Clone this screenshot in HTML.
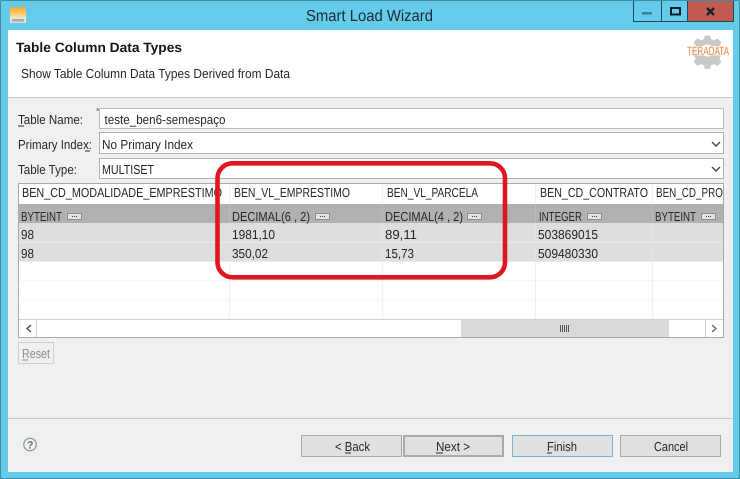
<!DOCTYPE html>
<html><head><meta charset="utf-8">
<style>
html,body{margin:0;padding:0;width:740px;height:479px;overflow:hidden;background:#65cbea}
svg{display:block}
text{font-family:"Liberation Sans",sans-serif;font-size:13px;fill:#262626;white-space:pre}
</style></head>
<body>
<svg width="740" height="479" viewBox="0 0 740 479" xmlns="http://www.w3.org/2000/svg" text-rendering="geometricPrecision">
<defs><clipPath id="tbl"><rect x="19" y="184" width="704" height="136"/></clipPath>
<clipPath id="h1"><rect x="19" y="184" width="204" height="20"/></clipPath>
<linearGradient id="ic" x1="0" y1="0" x2="0" y2="1"><stop offset="0" stop-color="#f6a92c"/><stop offset=".55" stop-color="#fad98a"/><stop offset=".7" stop-color="#ece9dc"/><stop offset="1" stop-color="#dcdcd8"/></linearGradient>
<filter id="soft" x="0" y="0" width="100%" height="100%"><feGaussianBlur stdDeviation="0.35"/></filter></defs>
<g filter="url(#soft)">
<!-- window frame -->
<rect x="0.5" y="0.5" width="739" height="478" fill="#65cbea" stroke="#1d4a5e"/>
<!-- title icon -->
<rect x="10" y="7" width="16" height="16" fill="url(#ic)"/>
<rect x="12" y="19" width="12" height="2.500" fill="#a8a8a4"/>
<text x="306" y="21" textLength="127" lengthAdjust="spacingAndGlyphs" style="font-size:16px;fill:#1c2c36">Smart Load Wizard</text>
<!-- window controls -->
<rect x="633.500" y="0.500" width="28" height="21" fill="#65cbea" stroke="#1d4a5e"/>
<rect x="661.500" y="0.500" width="26" height="21" fill="#65cbea" stroke="#1d4a5e"/>
<rect x="687.500" y="0.500" width="46" height="21" fill="#c25a50" stroke="#1d4a5e"/>
<rect x="642" y="12" width="10" height="2.500" fill="#3f7f98"/>
<rect x="671" y="8" width="9" height="6.500" fill="none" stroke="#0c1a22" stroke-width="2"/>
<path d="M707 8l7 7M714 8l-7 7" stroke="#17222a" stroke-width="2.400" fill="none"/>
<!-- content -->
<rect x="8" y="30" width="725" height="442" fill="#f0f0f0"/>
<rect x="8" y="30" width="725" height="67" fill="#fff"/>
<rect x="8" y="97" width="725" height="1" fill="#c8c8c8"/>
<text x="16" y="52" textLength="166" lengthAdjust="spacingAndGlyphs" style="font-size:13.500px;font-weight:bold;fill:#151515">Table Column Data Types</text>
<text x="21" y="78" textLength="269" lengthAdjust="spacingAndGlyphs">Show Table Column Data Types Derived from Data</text>
<!-- logo -->
<g transform="translate(707.500 50.500) scale(.68)">
<path fill="#c9c9c9" d="M-4-22h8l1 5 5 2 4.500-3 6 6-3 4.500 2 5 5 1v8l-5 1-2 5 3 4.500-6 6-4.500-3-5 2-1 5h-8l-1-5-5-2-4.500 3-6-6 3-4.500-2-5-5-1v-8l5-1 2-5-3-4.500 6-6 4.500 3 5-2z"/>
<circle r="9" fill="#fff"/>
</g>
<rect x="686" y="46" width="43" height="9.500" fill="#fff" opacity=".8"/>
<text x="687" y="55" textLength="42" lengthAdjust="spacingAndGlyphs" style="font-size:12px;fill:#ee8a3c">TERADATA</text>
<!-- fields -->
<text x="18" y="124" textLength="65" lengthAdjust="spacingAndGlyphs">Table Name:</text>
<path d="M18 126h6" stroke="#2a2a2a"/>
<text x="96" y="114" style="font-size:9px;fill:#666">*</text>
<rect x="99.500" y="108.500" width="624" height="20" fill="#fff" stroke="#bcbcbc"/>
<text x="104.500" y="124" textLength="121" lengthAdjust="spacingAndGlyphs">teste_ben6-semespaço</text>
<text x="18" y="149" textLength="74" lengthAdjust="spacingAndGlyphs">Primary Index:</text>
<path d="M85 151h5" stroke="#2a2a2a"/>
<rect x="99.500" y="132.500" width="624" height="21" fill="#fff" stroke="#b0b0b0"/>
<text x="102" y="149" textLength="91" lengthAdjust="spacingAndGlyphs">No Primary Index</text>
<path d="M712 142l4 4 4-4" fill="none" stroke="#444" stroke-width="1.400"/>
<text x="18" y="174" textLength="59" lengthAdjust="spacingAndGlyphs">Table Type:</text>
<rect x="99.500" y="158.500" width="624" height="20" fill="#fff" stroke="#b0b0b0"/>
<text x="102" y="174" textLength="52" lengthAdjust="spacingAndGlyphs">MULTISET</text>
<path d="M712 167l4 4 4-4" fill="none" stroke="#444" stroke-width="1.400"/>
<!-- table -->
<rect x="18.500" y="183.500" width="705" height="154" fill="#fff" stroke="#a8a8a8"/>
<g clip-path="url(#tbl)">
<rect x="19" y="204" width="704" height="19" fill="#b1b1b1"/>
<rect x="19" y="223" width="704" height="19.500" fill="#dedede"/>
<rect x="19" y="243" width="704" height="18" fill="#dedede"/>
<path d="M19 242.500h704M19 261.500h704" stroke="#ebebeb"/>
<path d="M19 280.500h704M19 300.500h704" stroke="#f6f6f6"/>
<path d="M229.500 184v20M382.500 184v20M535.500 184v20M652.500 184v20M229.500 262v58M382.500 262v58M535.500 262v58M652.500 262v58" stroke="#f1f1f1"/>
<path d="M229.500 204v19M382.500 204v19M535.500 204v19M652.500 204v19" stroke="#b9b9b9"/>
<path d="M229.500 223v38M382.500 223v38M535.500 223v38M652.500 223v38" stroke="#e3e3e3"/>
<g clip-path="url(#h1)"><text x="22" y="197" textLength="200" lengthAdjust="spacingAndGlyphs">BEN_CD_MODALIDADE_EMPRESTIMO</text></g>
<text x="234" y="197" textLength="116" lengthAdjust="spacingAndGlyphs">BEN_VL_EMPRESTIMO</text>
<text x="387" y="197" textLength="91" lengthAdjust="spacingAndGlyphs">BEN_VL_PARCELA</text>
<text x="540" y="197" textLength="108" lengthAdjust="spacingAndGlyphs">BEN_CD_CONTRATO</text>
<text x="656" y="197" textLength="74" lengthAdjust="spacingAndGlyphs">BEN_CD_PROD</text>
<text x="21" y="221" textLength="41" lengthAdjust="spacingAndGlyphs">BYTEINT</text>
<text x="232" y="221" textLength="78" lengthAdjust="spacingAndGlyphs">DECIMAL(6 , 2)</text>
<text x="385" y="221" textLength="78" lengthAdjust="spacingAndGlyphs">DECIMAL(4 , 2)</text>
<text x="539" y="221" textLength="43" lengthAdjust="spacingAndGlyphs">INTEGER</text>
<text x="655" y="221" textLength="41" lengthAdjust="spacingAndGlyphs">BYTEINT</text>
<g fill="#e4e4e4" stroke="#8c8c8c">
<rect x="67.500" y="213.500" width="14" height="6"/><rect x="315.500" y="213.500" width="14" height="6"/><rect x="467.500" y="213.500" width="14" height="6"/><rect x="587.500" y="213.500" width="14" height="6"/><rect x="701.500" y="213.500" width="14" height="6"/>
</g>
<path d="M72 216.500h5M320 216.500h5M472 216.500h5M592 216.500h5M706 216.500h5" stroke="#444" stroke-dasharray="1 1"/>
<text x="21" y="239" textLength="13" lengthAdjust="spacingAndGlyphs">98</text>
<text x="232" y="239" textLength="43" lengthAdjust="spacingAndGlyphs">1981,10</text>
<text x="385" y="239" textLength="32" lengthAdjust="spacingAndGlyphs">89,11</text>
<text x="538" y="239" textLength="60" lengthAdjust="spacingAndGlyphs">503869015</text>
<text x="21" y="258" textLength="13" lengthAdjust="spacingAndGlyphs">98</text>
<text x="232" y="258" textLength="36" lengthAdjust="spacingAndGlyphs">350,02</text>
<text x="385" y="258" textLength="29" lengthAdjust="spacingAndGlyphs">15,73</text>
<text x="538" y="258" textLength="60" lengthAdjust="spacingAndGlyphs">509480330</text>
</g>
<!-- scrollbar -->
<rect x="19" y="320" width="704" height="17" fill="#fff"/>
<path d="M19 319.500h704M36.500 320v17M705.500 320v17" stroke="#d0d0d0"/>
<rect x="461" y="320" width="208" height="17" fill="#d9d9d9"/>
<path d="M560.500 325v7M562.500 325v7M564.500 325v7M566.500 325v7M568.500 325v7" stroke="#555" stroke-width="1"/>
<path d="M31 325l-4 3.500 4 3.500" fill="none" stroke="#444" stroke-width="1.300"/>
<path d="M712 325l4 3.500-4 3.500" fill="none" stroke="#666" stroke-width="1.300"/>
<!-- reset -->
<rect x="18.500" y="342.500" width="35" height="21" fill="#f0f0f0" stroke="#cfcfcf"/>
<text x="22" y="358" textLength="28" lengthAdjust="spacingAndGlyphs" style="fill:#8e8e8e">Reset</text>
<path d="M22 360h6" stroke="#8e8e8e"/>
<!-- footer -->
<rect x="8" y="418" width="725" height="1" fill="#c8c8c8"/>
<circle cx="30" cy="444.500" r="6.200" fill="#f4f4f4" stroke="#8b9bb0" stroke-width="1.300"/>
<text x="27" y="448.500" style="font-size:10.500px;font-weight:bold;fill:#666">?</text>
<rect x="301.500" y="435.500" width="100" height="21" fill="#e0e0e0" stroke="#a8a8a8"/>
<rect x="403.500" y="435.500" width="100" height="21" fill="#e0e0e0" stroke="#a8a8a8"/>
<rect x="404.500" y="436.500" width="98" height="19" fill="none" stroke="#777" stroke-dasharray="1 1"/>
<rect x="512.500" y="435.500" width="100" height="21" fill="#e0e0e0" stroke="#7fb0d0"/>
<rect x="620.500" y="435.500" width="100" height="21" fill="#e0e0e0" stroke="#a8a8a8"/>
<text x="335" y="451" textLength="35" lengthAdjust="spacingAndGlyphs">&lt; Back</text>
<path d="M345 453h6" stroke="#2a2a2a"/>
<text x="436" y="451" textLength="34" lengthAdjust="spacingAndGlyphs">Next &gt;</text>
<path d="M436 453h7" stroke="#2a2a2a"/>
<text x="547" y="451" textLength="30" lengthAdjust="spacingAndGlyphs">Finish</text>
<path d="M547 453h5" stroke="#2a2a2a"/>
<text x="654" y="451" textLength="34" lengthAdjust="spacingAndGlyphs">Cancel</text>
<!-- red highlight -->
<rect x="217.500" y="163.300" width="287.500" height="114" rx="15" ry="15" fill="none" stroke="#de1622" stroke-width="4.600"/>
</g>
</svg>
</body></html>
